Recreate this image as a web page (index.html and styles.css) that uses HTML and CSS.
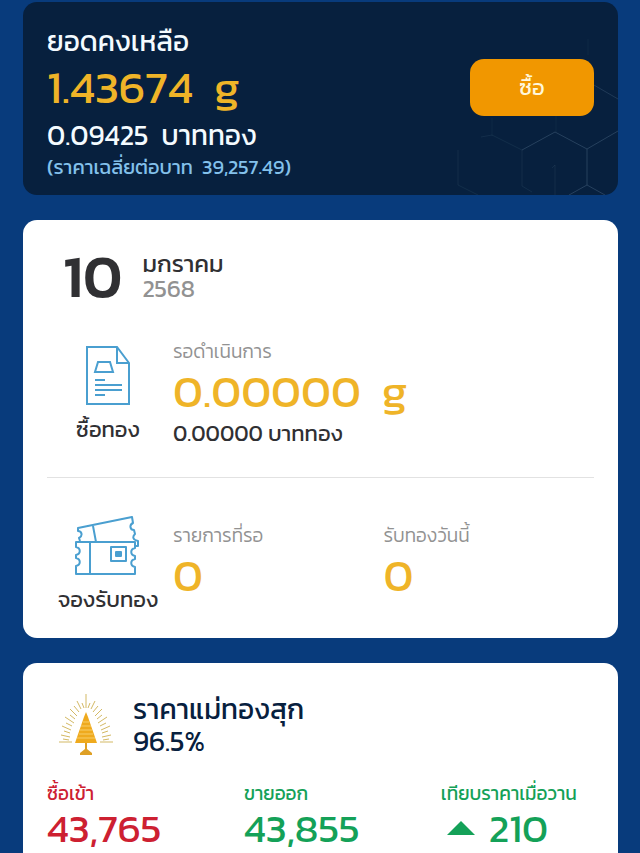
FILE: index.html
```html
<!DOCTYPE html>
<html lang="th">
  <head>
    <meta charset="UTF-8" />
    <meta name="viewport" content="width=device-width, initial-scale=1.0" />
    <title>ยอดคงเหลือ</title>
    <link rel="stylesheet" href="styles.css">
  </head>
  <body>
    <main class="page">
      <!-- balance -->
      <section class="card balance">
        <svg class="balance-pattern" width="180" height="160" viewBox="0 0 180 160" fill="none" stroke="#45627d">
          <path opacity=".12" d="M65 60v15M95 40l10-5M150 4v16M54 83v18M118 80v17" />
          <path opacity=".2" d="M84 115l-30-15M43 102l11-2M20 115v35l20 10M84 115v36l10 6M117 160v-30l-3 3" />
          <path opacity=".5" d="M84 115l33-18 32 17v36l-18 10M149 114l31-18M149 150l18 10" />
          <path opacity=".4" d="M149 46l31 18" />
        </svg>
        <div class="balance-info">
          <h1 class="balance-title">ยอดคงเหลือ</h1>
          <p class="balance-amount">1.43674&nbsp; g</p>
          <p class="balance-baht">0.09425&nbsp; บาททอง</p>
          <p class="balance-note">(ราคาเฉลี่ยต่อบาท&nbsp; 39,257.49)</p>
        </div>
        <button class="buy-button" type="button">ซื้อ</button>
      </section>

      <!-- today -->
      <section class="card today">
        <div class="date">
          <span class="date-day">10</span>
          <div>
            <p class="date-month">มกราคม</p>
            <p class="date-year">2568</p>
          </div>
        </div>

        <div class="row">
          <div class="row-icon">
            <svg width="66" height="60" viewBox="0 0 66 60" fill="none" stroke="#4a9fd0" stroke-width="2">
              <path d="M12 1h30l12 16v41H12zM42 1v16h12M23 16h12l3 10H20z" />
              <path d="M20 34h10M20 39h27M20 44h27M20 49h10" />
            </svg>
            <span>ซื้อทอง</span>
          </div>
          <div class="row-info">
            <p class="label">รอดำเนินการ</p>
            <p class="amount">0.00000&nbsp; g</p>
            <p class="baht">0.00000 บาททอง</p>
          </div>
        </div>

        <div class="row row-reserve">
          <div class="row-icon">
            <svg width="66" height="60" viewBox="0 0 66 60" fill="none" stroke="#4a9fd0" stroke-width="2" stroke-linejoin="round">
              <path d="M1 26h59v6c-5 1-5 7 0 8v3c-5 1-5 7 0 8v7H1v-8c5-1 5-7 0-8v-3c5-1 5-7 0-8z" />
              <path d="M5 25l-1-3c4-2 3-7-1-7V12L57 1l1 6c-4 2-3 7 1 7l1 4c-3 3-2 6 3 7v5h-3M18 10l3 16M15 26v32" />
              <path d="M36 31h15v14H36z" />
              <path d="M41 36h5v4h-5z" fill="#4a9fd0" />
            </svg>
            <span>จองรับทอง</span>
          </div>
          <div class="row-info">
            <p class="label">รายการที่รอ</p>
            <p class="amount">0</p>
          </div>
          <div class="row-info">
            <p class="label">รับทองวันนี้</p>
            <p class="amount">0</p>
          </div>
        </div>
      </section>

      <!-- gold price -->
      <section class="card price">
        <div class="price-head">
          <svg width="54" height="62" viewBox="0 0 54 62" fill="none">
            <g stroke="#d3b964">
              <path d="M27 0v14M23 9l2 5M31 9l-2 5M18 7l4 8M36 7l-4 8M15 12l5 6M39 12l-5 6M11 15l7 7M43 15l-7 7M11 21l5 4M43 21l-5 4M6 23l9 6M48 23l-9 6M7 29l6 3M47 29l-6 3M3 32l9 4M51 32l-9 4M5 37l6 2M49 37l-6 2M2 41l9 2M52 41l-9 2M4 45l6 1M50 45l-6 1M0 48h13M54 48H41" />
            </g>
            <path d="M27 18l2 5 9 26H16l9-26z" fill="#efaa1e" />
            <path d="M24 28h6M22 32h10M21 36h12M20 40h14M18 44h18" stroke="#f8ce69" />
            <path d="M26 49h2v6l5 4v2H21v-2l5-4z" fill="#dfa025" />
          </svg>
          <div>
            <h2 class="price-title">ราคาแม่ทองสุก</h2>
            <p class="price-title">96.5%</p>
          </div>
        </div>
        <div class="price-list">
          <div class="price-item price-buy">
            <p class="price-label">ซื้อเข้า</p>
            <p class="price-value">43,765</p>
          </div>
          <div class="price-item">
            <p class="price-label">ขายออก</p>
            <p class="price-value">43,855</p>
          </div>
          <div class="price-item">
            <p class="price-label">เทียบราคาเมื่อวาน</p>
            <p class="price-value price-diff"><span class="arrow-up"></span>210</p>
          </div>
        </div>
      </section>
    </main>
  </body>
</html>
```
FILE: styles.css
```css
* {
  box-sizing: border-box;
}

body {
  margin: 0;
  background-color: #083b7c;
  color: #303033;
  font-family: Kanit, Prompt, "Noto Sans", sans-serif;
}

h1,
h2,
p {
  margin: 0;
  font-weight: 400;
  white-space: nowrap;
}

.page {
  display: flex;
  flex-direction: column;
  gap: 25px;
  min-height: 100vh;
  padding: 2px 22px 0 23px;
}

.card {
  padding: 24px;
  border-radius: 14px;
  background-color: #fff;
}

/* balance card */
.balance {
  position: relative;
  display: flex;
  justify-content: space-between;
  align-items: flex-start;
  overflow: hidden;
  padding: 23px 24px 14px;
  background-color: #07203e;
  color: #f4fbff;
}

.balance-pattern {
  position: absolute;
  right: 0;
  bottom: 0;
}

.balance-info {
  position: relative;
}

.balance-title {
  font-size: 28px;
  line-height: 32px;
}

.balance-amount {
  color: #efb428;
  font-size: 46px;
  line-height: 60px;
}

.balance-baht {
  font-size: 28px;
  line-height: 36px;
}

.balance-note {
  color: #83c1eb;
  font-size: 20px;
  line-height: 28px;
}

.buy-button {
  position: relative;
  width: 124px;
  height: 57px;
  margin-top: 34px;
  border: 0;
  border-radius: 14px;
  background-color: #f19700;
  color: #fff7dc;
  font: inherit;
  font-size: 22px;
}

/* today card */
.today {
  padding-bottom: 22px;
}

.date {
  display: flex;
  align-items: center;
  gap: 20px;
  height: 64px;
  padding-left: 16px;
}

.date-day {
  font-size: 60px;
  font-weight: 500;
}

.date-month,
.date-year {
  font-size: 24px;
  line-height: 25px;
}

.date-year {
  color: #929292;
}

.row {
  display: flex;
  padding: 32px 0 27px;
}

.row-reserve {
  padding: 34px 0 0;
  border-top: 1px solid #e2e2e2;
}

.row-icon {
  display: flex;
  flex-direction: column;
  align-items: center;
  flex: none;
  gap: 8px;
  width: 126px;
  padding: 6px 4px 0 0;
  font-size: 22px;
  line-height: 32px;
}

.row-reserve .row-icon {
  padding-top: 4px;
}

.row-info {
  flex: 1;
}

.label {
  color: #929292;
  font-size: 19px;
  font-weight: 300;
  line-height: 24px;
}

.row-reserve .label {
  margin-top: 12px;
}

.amount {
  color: #efb428;
  font-size: 46px;
  line-height: 54px;
}

.baht {
  font-size: 22px;
  line-height: 32px;
}

/* gold price card */
.price {
  flex: 1;
  padding: 30px 24px 0;
  border-radius: 14px 14px 0 0;
}

.price-head {
  display: flex;
  align-items: center;
  gap: 20px;
  padding-left: 12px;
  color: #07203e;
}

.price-title {
  font-size: 28px;
  line-height: 32px;
}

.price-list {
  display: grid;
  grid-template-columns: 36% 36% 1fr;
  padding-top: 25px;
}

.price-item {
  color: #14a158;
}

.price-buy {
  color: #cd2031;
}

.price-label {
  font-size: 19px;
  line-height: 24px;
}

.price-value {
  font-size: 40px;
  line-height: 44px;
}

.price-diff {
  display: flex;
  align-items: center;
  gap: 14px;
  padding-left: 6px;
}

.arrow-up {
  border: 14px solid transparent;
  border-top: 0;
  border-bottom-color: #14a158;
}
```
